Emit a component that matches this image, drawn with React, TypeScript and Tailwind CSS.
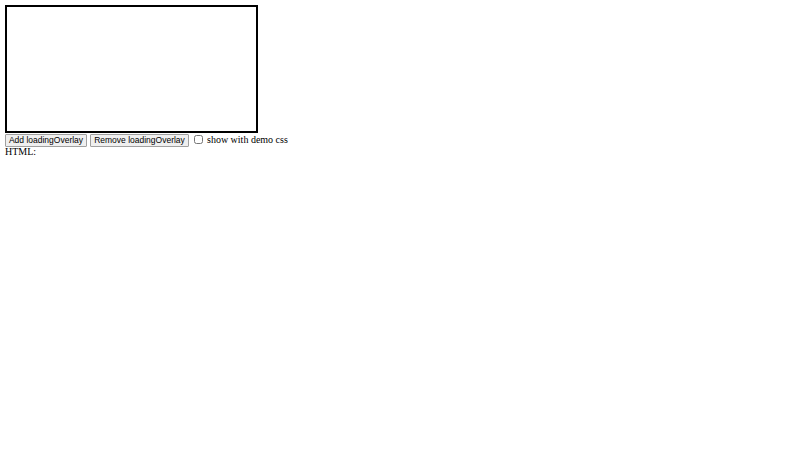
export default function App() {
  return (
    <div className="p-[5px] text-black bg-white" style={{ fontFamily: '"Liberation Serif", serif' }}>
      <div className="w-[253px] h-[128px] border-2 border-black" />
      <div className="flex items-center h-[14px] mt-[0px]">
        <button className="h-[13px] w-[82px] px-0 border border-[#a0a0a0] rounded-[1px] bg-[#efefef] text-[8.5px] leading-none text-black font-['Liberation_Sans',sans-serif]">
          Add loadingOverlay
        </button>
        <button className="ml-[3px] h-[13px] w-[99px] px-0 border border-[#a0a0a0] rounded-[1px] bg-[#efefef] text-[8.5px] leading-none text-black font-['Liberation_Sans',sans-serif]">
          Remove loadingOverlay
        </button>
        <input type="checkbox" className="ml-[5px] mr-[4px] w-[9px] h-[9px] -mt-[2px]" />
        <span className="text-[10px] leading-none -mt-[1px]">show with demo css</span>
      </div>
      <div className="text-[10px] leading-[11px] -mt-[1px]">HTML:</div>
    </div>
  );
}
